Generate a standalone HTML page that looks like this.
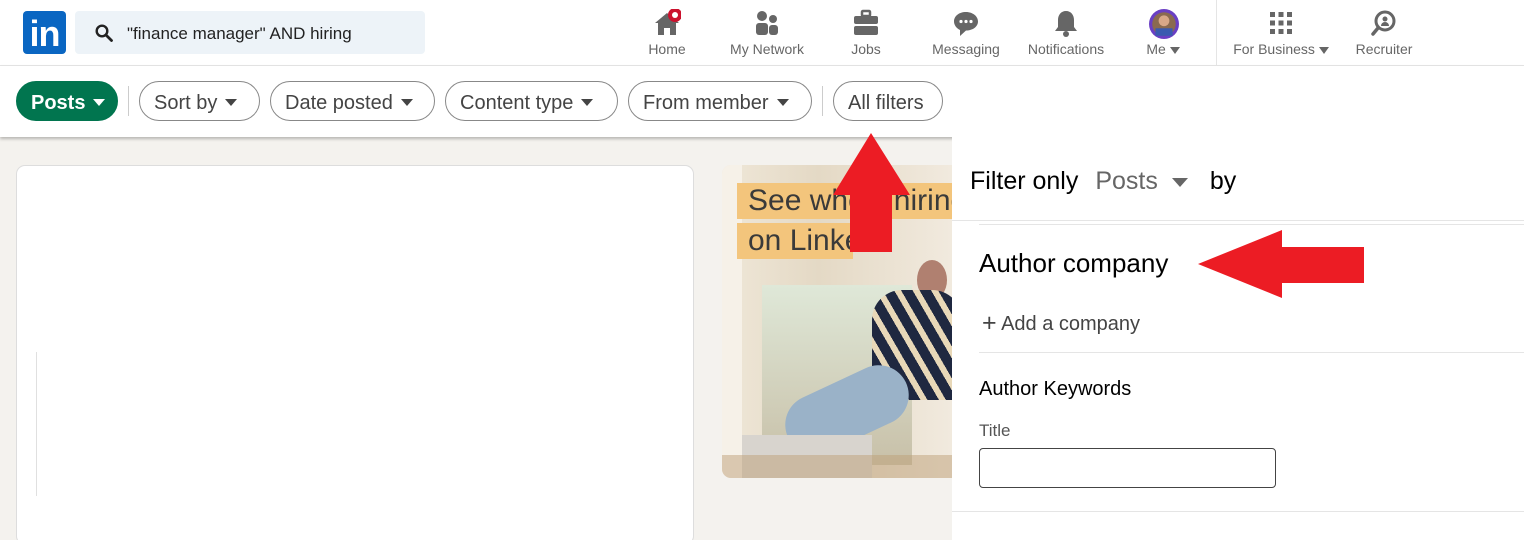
<!DOCTYPE html>
<html style="width:1524px;height:540px;overflow:hidden"><head><meta charset="utf-8">
<style>
*{box-sizing:border-box;margin:0;padding:0}
body{width:1524px;height:540px;overflow:hidden;background:#f4f2ee;font-family:"Liberation Sans",sans-serif;position:relative;color:#000}
.hdr{position:absolute;left:0;top:0;width:1524px;height:66px;background:#fff;border-bottom:1px solid #e5e5e5}
.logo{position:absolute;left:23px;top:11px;width:43px;height:43px;background:#0a66c2;border-radius:4px;color:#fff;font-weight:bold;font-size:36px;line-height:46px;text-align:center;letter-spacing:-1px}
.search{position:absolute;left:75px;top:11px;width:350px;height:43px;background:#edf3f8;border-radius:4px;font-size:17px;line-height:45px;padding-left:52px;color:#222}
.nav{position:absolute;top:0;height:65px;text-align:center;font-size:14px;color:#666}
.nav span{position:absolute;top:41px;left:0;width:100%;white-space:nowrap}
.nav svg{position:absolute;top:9px;left:50%;margin-left:-14px}
.bar{position:absolute;left:0;top:66px;width:1524px;height:71px;background:#fff;box-shadow:0 2px 3px rgba(0,0,0,.25)}
.pill{position:absolute;top:15px;height:40px;border:1px solid #888;border-radius:20px;font-size:20px;line-height:42px;padding:0 14px;color:#444;white-space:nowrap}
.pill i{display:inline-block;width:0;height:0;border-left:6px solid transparent;border-right:6px solid transparent;border-top:7px solid #444;vertical-align:middle;margin-left:8px;margin-top:-3px}
.sep{position:absolute;top:20px;width:1px;height:30px;background:#ccc}
.card{position:absolute;left:16px;top:165px;width:678px;height:380px;background:#fff;border-radius:9px;border:1px solid #ddd}
.ad{position:absolute;left:722px;top:165px;width:240px;height:313px;border-radius:9px;overflow:hidden;background:linear-gradient(90deg,#efe7d8,#e4d9c5 40%,#f2ebe0)}
.panel{position:absolute;left:952px;top:137px;width:572px;height:403px;background:#fff}
</style></head><body>
<div class="hdr">
 <div class="logo">in</div>
 <div class="search">"finance manager" AND hiring
  <svg style="position:absolute;left:20px;top:13px" width="18" height="18" viewBox="0 0 18 18"><circle cx="7" cy="7" r="5.3" fill="none" stroke="#222" stroke-width="2.4"/><path d="M11 11l5.5 5.5" stroke="#222" stroke-width="2.8" stroke-linecap="round"/></svg>
 </div>
 <div class="nav" style="left:636px;width:62px"><svg width="28" height="28" viewBox="0 0 28 28"><path d="M2 14L14 4l12 10h-3v12h-6v-7h-6v7H5V14z" fill="#666"/><circle cx="22" cy="6" r="7" fill="#cb112d"/><circle cx="22" cy="6" r="3" fill="#fff"/></svg><span>Home</span></div>
 <div class="nav" style="left:722px;width:90px"><svg width="28" height="28" viewBox="0 0 28 28"><circle cx="9" cy="7" r="5" fill="#666"/><circle cx="20" cy="10" r="4" fill="#666"/><rect x="3" y="14" width="12" height="12" rx="3" fill="#666"/><rect x="16" y="16" width="9" height="10" rx="3" fill="#666"/></svg><span>My Network</span></div>
 <div class="nav" style="left:836px;width:60px"><svg width="28" height="28" viewBox="0 0 28 28"><rect x="10" y="2" width="8" height="5" rx="1" fill="none" stroke="#666" stroke-width="2.5"/><rect x="2" y="7" width="24" height="8" rx="2" fill="#666"/><rect x="2" y="17" width="24" height="9" rx="2" fill="#666"/></svg><span>Jobs</span></div>
 <div class="nav" style="left:926px;width:80px"><svg width="28" height="28" viewBox="0 0 28 28"><path d="M14 3C7 3 2 7 2 12.5c0 4 3 7 6 8.5V27l6-5.5c7 0 12-4 12-9S21 3 14 3z" fill="#666"/><circle cx="9" cy="12.5" r="1.6" fill="#fff"/><circle cx="14" cy="12.5" r="1.6" fill="#fff"/><circle cx="19" cy="12.5" r="1.6" fill="#fff"/></svg><span>Messaging</span></div>
 <div class="nav" style="left:1020px;width:92px"><svg width="28" height="28" viewBox="0 0 28 28"><path d="M14 2c-5 0-8 4-8 9v7l-3 4h22l-3-4v-7c0-5-3-9-8-9z" fill="#666"/><circle cx="14" cy="25" r="3" fill="#666"/></svg><span>Notifications</span></div>
 <div class="nav" style="left:1140px;width:46px"><svg width="30" height="30" viewBox="0 0 28 28"><circle cx="14" cy="14" r="14" fill="#6a3fc4"/><circle cx="14" cy="14" r="11" fill="#8a6a50"/><circle cx="14" cy="11" r="5" fill="#d8a888"/><rect x="6" y="18" width="16" height="7" fill="#3a5ab0"/></svg><span>Me <i style="display:inline-block;border-left:5px solid transparent;border-right:5px solid transparent;border-top:7px solid #666;vertical-align:middle"></i></span></div>
 <div style="position:absolute;left:1216px;top:0;width:1px;height:65px;background:#e5e5e5"></div>
 <div class="nav" style="left:1228px;width:106px"><svg width="28" height="28" viewBox="0 0 28 28" fill="#666"><rect x="3" y="3" width="5" height="5"/><rect x="11.5" y="3" width="5" height="5"/><rect x="20" y="3" width="5" height="5"/><rect x="3" y="11.5" width="5" height="5"/><rect x="11.5" y="11.5" width="5" height="5"/><rect x="20" y="11.5" width="5" height="5"/><rect x="3" y="20" width="5" height="5"/><rect x="11.5" y="20" width="5" height="5"/><rect x="20" y="20" width="5" height="5"/></svg><span>For Business <i style="display:inline-block;border-left:5px solid transparent;border-right:5px solid transparent;border-top:7px solid #666;vertical-align:middle"></i></span></div>
 <div class="nav" style="left:1350px;width:68px"><svg width="28" height="28" viewBox="0 0 28 28"><circle cx="15" cy="12" r="9" fill="none" stroke="#666" stroke-width="3"/><circle cx="15" cy="10" r="2.5" fill="#666"/><path d="M11 17a4 4 0 018 0z" fill="#666"/><path d="M8 19l-5 6" stroke="#666" stroke-width="3.5" stroke-linecap="round"/></svg><span>Recruiter</span></div>
</div>
<div class="bar">
 <div class="pill" style="left:16px;width:102px;background:#01754f;border-color:#01754f;color:#fff;font-weight:bold;padding:0 14px">Posts<i style="border-top-color:#fff"></i></div>
 <div class="sep" style="left:128px"></div>
 <div class="pill" style="left:139px;width:121px">Sort by<i></i></div>
 <div class="pill" style="left:270px;width:165px">Date posted<i></i></div>
 <div class="pill" style="left:445px;width:173px">Content type<i></i></div>
 <div class="pill" style="left:628px;width:184px">From member<i></i></div>
 <div class="sep" style="left:822px"></div>
 <div class="pill" style="left:833px;width:110px">All filters</div>
</div>
<div class="card"><div style="position:absolute;left:19px;top:186px;width:1px;height:144px;background:#e0e0e0"></div></div>
<div class="ad">
 <div style="position:absolute;left:0;top:0;width:20px;height:313px;background:#f6f1e8"></div>
 <div style="position:absolute;left:40px;top:120px;width:150px;height:180px;background:linear-gradient(#dfe8d8,#c8c0a8)"></div>
 <div style="position:absolute;left:15px;top:18px;width:230px;height:36px;background:#f3c57c;font-size:30px;line-height:36px;color:#3a3a3a;padding-left:11px;white-space:nowrap">See who's hiring</div>
 <div style="position:absolute;left:15px;top:58px;width:116px;height:36px;background:#f3c57c;font-size:30px;line-height:36px;color:#3a3a3a;padding-left:11px;white-space:nowrap;overflow:hidden">on LinkedIn.</div>
 <div style="position:absolute;left:195px;top:95px;width:30px;height:40px;border-radius:50%;background:#b08070"></div>
 <div style="position:absolute;left:150px;top:125px;width:90px;height:110px;border-radius:30px 30px 10px 10px;background:repeating-linear-gradient(60deg,#1f2840 0 10px,#e8d8b8 10px 16px)"></div>
 <div style="position:absolute;left:60px;top:215px;width:130px;height:60px;border-radius:30px;background:#9ab2c8;transform:rotate(-25deg)"></div>
 <div style="position:absolute;left:20px;top:270px;width:130px;height:43px;background:#d8d4ce"></div>
 <div style="position:absolute;left:0;top:290px;width:240px;height:23px;background:rgba(190,160,120,.5)"></div>
</div>
<div class="panel">
 <div style="position:absolute;left:18px;top:30px;font-size:25px;white-space:nowrap">Filter only <span style="color:#666;margin-left:10px">Posts</span><i style="display:inline-block;border-left:8px solid transparent;border-right:8px solid transparent;border-top:9px solid #666;vertical-align:middle;margin:0 22px 0 14px"></i>by</div>
 <div style="position:absolute;left:0;top:83px;width:572px;height:1px;background:#e5e5e5"></div>
 <div style="position:absolute;left:27px;top:87px;width:545px;height:1px;background:#e5e5e5"></div>
 <div style="position:absolute;left:27px;top:111px;font-size:26px">Author company</div>
 <div style="position:absolute;left:30px;top:172px;font-size:20px;color:#444"><span style="font-size:25px;vertical-align:-1px">+</span> Add a company</div>
 <div style="position:absolute;left:27px;top:215px;width:545px;height:1px;background:#e5e5e5"></div>
 <div style="position:absolute;left:27px;top:241px;font-size:20px">Author Keywords</div>
 <div style="position:absolute;left:27px;top:284px;font-size:17px;color:#555">Title</div>
 <div style="position:absolute;left:27px;top:311px;width:297px;height:40px;border:1px solid #444;border-radius:4px"></div>
 <div style="position:absolute;left:0;top:374px;width:572px;height:1px;background:#e5e5e5"></div>
</div>
<svg style="position:absolute;left:0;top:0" width="1524" height="540"><polygon points="871,133 910,195 892,195 892,252 850,252 850,195 833,195" fill="#ec1c24"/><polygon points="1198,264 1282,230 1282,247 1364,247 1364,283 1282,283 1282,298" fill="#ec1c24"/></svg>
</body></html>
